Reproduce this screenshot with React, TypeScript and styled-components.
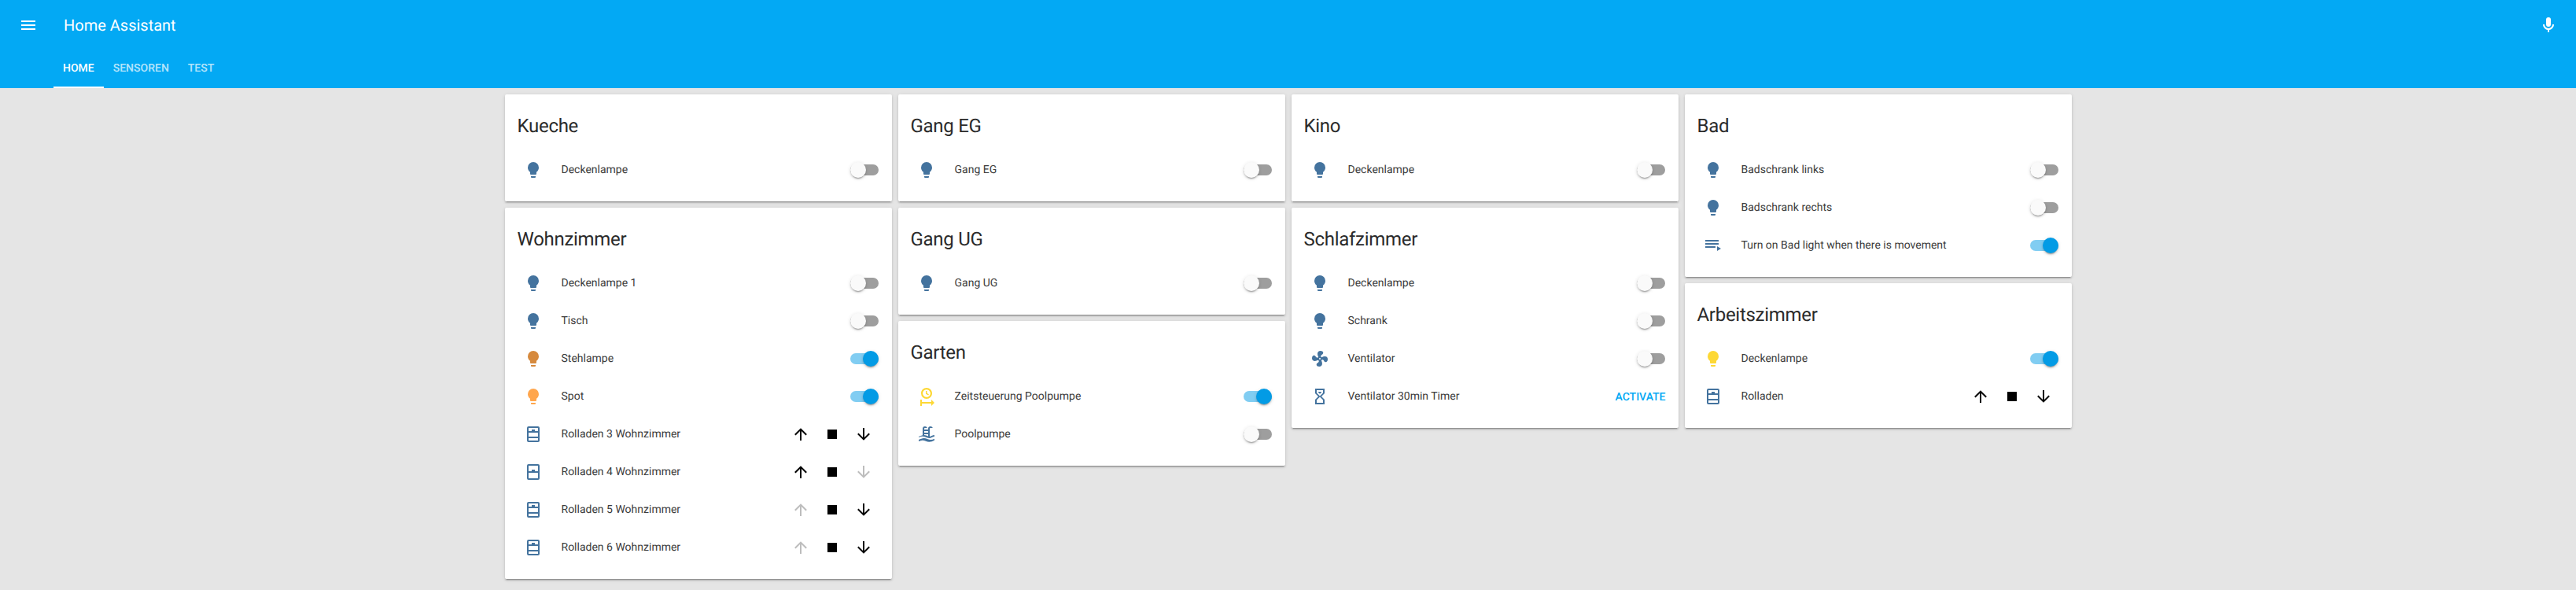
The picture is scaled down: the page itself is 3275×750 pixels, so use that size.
import { createGlobalStyle } from "styled-components";
import styled from "styled-components";

const ICONS = {
  menu: "M3,6H21V8H3V6M3,11H21V13H3V11M3,16H21V18H3V16Z",
  mic: "M12,2A3,3 0 0,1 15,5V11A3,3 0 0,1 12,14A3,3 0 0,1 9,11V5A3,3 0 0,1 12,2M19,11C19,14.53 16.39,17.44 13,17.93V21H11V17.93C7.61,17.44 5,14.53 5,11H7A5,5 0 0,0 12,16A5,5 0 0,0 17,11H19Z",
  bulb: "M12,2A7,7 0 0,0 5,9C5,11.38 6.19,13.47 8,14.74V17A1,1 0 0,0 9,18H15A1,1 0 0,0 16,17V14.74C17.81,13.47 19,11.38 19,9A7,7 0 0,0 12,2M9,21A1,1 0 0,0 10,22H14A1,1 0 0,0 15,21V20H9V21Z",
  up: "M13,20H11V8L5.5,13.5L4.08,12.08L12,4.16L19.92,12.08L18.5,13.5L13,8V20Z",
  down: "M11,4H13V16L18.5,10.5L19.92,11.92L12,19.84L4.08,11.92L5.5,10.5L11,16V4Z",
  stop: "M18,18H6V6H18V18Z",
  windowOpen: "M6,8H10V6H14V8H18V4H6V8M18,10H6V15H18V10M6,20H18V17H6V20M6,2H18A2,2 0 0,1 20,4V20A2,2 0 0,1 18,22H6A2,2 0 0,1 4,20V4A2,2 0 0,1 6,2Z",
  windowClosed: "M6,11H10V9H14V11H18V4H6V11M18,13H6V20H18V13M6,2H18A2,2 0 0,1 20,4V20A2,2 0 0,1 18,22H6A2,2 0 0,1 4,20V4A2,2 0 0,1 6,2Z",
  fan: "M12,11A1,1 0 0,0 11,12A1,1 0 0,0 12,13A1,1 0 0,0 13,12A1,1 0 0,0 12,11M12.5,2C17,2 17.11,5.57 14.75,6.75C13.76,7.24 13.32,8.29 13.13,9.22C13.61,9.42 14.03,9.73 14.35,10.13C18.05,8.13 22.03,8.92 22.03,12.5C22.03,17 18.46,17.1 17.28,14.73C16.78,13.74 15.72,13.3 14.79,13.11C14.59,13.59 14.28,14 13.88,14.34C15.87,18.03 15.08,22 11.5,22C7,22 6.91,18.42 9.27,17.24C10.25,16.75 10.69,15.71 10.89,14.79C10.4,14.59 9.97,14.27 9.65,13.87C5.96,15.85 2,15.07 2,11.5C2,7 5.56,6.89 6.74,9.26C7.24,10.25 8.29,10.68 9.22,10.87C9.41,10.39 9.73,9.97 10.14,9.65C8.15,5.96 8.94,2 12.5,2Z",
  sand: "M6,2H18V8L14,12L18,16V22H6V16L10,12L6,8V2M16,16.5L12,12.5L8,16.5V20H16V16.5M12,11.5L16,7.5V4H8V7.5L12,11.5M10,6H14V6.75L12,8.75L10,6.75V6Z",
  playlist: "M19,9H2V11H19V9M19,5H2V7H19V5M2,15H15V13H2V15M17,13V19L22,16L17,13Z",
  pool: "M2,15C3.67,14.25 5.33,13.5 7,13.17V5A3,3 0 0,1 10,2C11.31,2 12.42,2.83 12.83,4H10A1,1 0 0,0 9,5V6H14V5A3,3 0 0,1 17,2C18.31,2 19.42,2.83 19.83,4H17A1,1 0 0,0 16,5V14.94C18,14.62 20,13 22,13V15C19.78,15 17.56,17 15.33,17C12.44,17 9.56,14.83 6.67,14.83C5.11,14.83 3.56,15.42 2,16V15M14,8H9V10H14V8M14,12H9V13C10.67,13.08 12.33,13.79 14,14.45V12M2,19C4.22,18 6.44,17 8.67,17C11.56,17 14.44,19 17.33,19C18.89,19 20.44,18.4 22,17.67V19.67C19.78,20.67 17.56,21.67 15.33,21.67C12.44,21.67 9.56,19.67 6.67,19.67C5.11,19.67 3.56,20.27 2,21V19Z",
  clockStart: "M12,1C8.14,1 5,4.14 5,8A7,7 0 0,0 12,15C15.86,15 19,11.87 19,8C19,4.14 15.86,1 12,1M12,3.15C14.67,3.15 16.85,5.32 16.85,8C16.85,10.68 14.67,12.85 12,12.85A4.85,4.85 0 0,1 7.15,8A4.85,4.85 0 0,1 12,3.15M11,5V8.69L14.19,10.53L14.94,9.23L12.5,7.82V5M4,16V24H6V21H18V24L22,20L18,16V19H6V16H4Z",
};

type IconName = keyof typeof ICONS;

const BLUE = "#44739e";

type Row =
  | { kind: "toggle"; icon: IconName; label: string; on?: boolean; color?: string }
  | { kind: "cover"; icon: IconName; label: string; upOff?: boolean; downOff?: boolean }
  | { kind: "scene"; icon: IconName; label: string };

type CardData = { title: string; rows: Row[] };

const lamp = (label: string, on = false, color = BLUE): Row => ({
  kind: "toggle",
  icon: "bulb",
  label,
  on,
  color,
});

const COLUMNS: CardData[][] = [
  [
    { title: "Kueche", rows: [lamp("Deckenlampe")] },
    {
      title: "Wohnzimmer",
      rows: [
        lamp("Deckenlampe 1"),
        lamp("Tisch"),
        lamp("Stehlampe", true, "#d68a3e"),
        lamp("Spot", true, "#ffa64d"),
        { kind: "cover", icon: "windowOpen", label: "Rolladen 3 Wohnzimmer" },
        { kind: "cover", icon: "windowClosed", label: "Rolladen 4 Wohnzimmer", downOff: true },
        { kind: "cover", icon: "windowOpen", label: "Rolladen 5 Wohnzimmer", upOff: true },
        { kind: "cover", icon: "windowOpen", label: "Rolladen 6 Wohnzimmer", upOff: true },
      ],
    },
  ],
  [
    { title: "Gang EG", rows: [lamp("Gang EG")] },
    { title: "Gang UG", rows: [lamp("Gang UG")] },
    {
      title: "Garten",
      rows: [
        { kind: "toggle", icon: "clockStart", label: "Zeitsteuerung Poolpumpe", on: true, color: "#fdd835" },
        { kind: "toggle", icon: "pool", label: "Poolpumpe" },
      ],
    },
  ],
  [
    { title: "Kino", rows: [lamp("Deckenlampe")] },
    {
      title: "Schlafzimmer",
      rows: [
        lamp("Deckenlampe"),
        lamp("Schrank"),
        { kind: "toggle", icon: "fan", label: "Ventilator" },
        { kind: "scene", icon: "sand", label: "Ventilator 30min Timer" },
      ],
    },
  ],
  [
    {
      title: "Bad",
      rows: [
        lamp("Badschrank links"),
        lamp("Badschrank rechts"),
        { kind: "toggle", icon: "playlist", label: "Turn on Bad light when there is movement", on: true },
      ],
    },
    {
      title: "Arbeitszimmer",
      rows: [
        lamp("Deckenlampe", true, "#fdd835"),
        { kind: "cover", icon: "windowOpen", label: "Rolladen" },
      ],
    },
  ],
];

const GlobalStyle = createGlobalStyle`
  html, body {
    margin: 0;
    height: 100%;
    overflow: hidden;
    background: #e5e5e5;
    font-family: Roboto, "Noto Sans", sans-serif;
    -webkit-font-smoothing: antialiased;
    text-rendering: geometricPrecision;
  }
`;

const Header = styled.header`
  height: 112px;
  background: #03a9f4;
  color: #fff;
  box-sizing: border-box;
  display: flex;
  flex-direction: column;
`;

const Toolbar = styled.div`
  height: 64px;
  display: flex;
  align-items: center;
  padding: 0 23px 0 24px;
`;

const AppTitle = styled.div`
  flex: 1;
  margin-left: 33px;
  font-size: 20px;
  font-weight: 400;
`;

const Tabs = styled.nav`
  height: 48px;
  display: flex;
  padding-left: 68px;
`;

const Tab = styled.div<{ $active?: boolean }>`
  height: 48px;
  box-sizing: border-box;
  padding: 0 12px;
  display: flex;
  align-items: center;
  font-size: 14px;
  font-weight: 500;
  text-transform: uppercase;
  opacity: ${(p) => (p.$active ? 1 : 0.7)};
  border-bottom: 2px solid ${(p) => (p.$active ? "#fff" : "transparent")};
`;

const Board = styled.main`
  max-width: 2000px;
  margin: 0 auto;
  padding-top: 4px;
  display: flex;
  align-items: flex-start;
`;

const Column = styled.div`
  flex: 1 1 0;
  min-width: 0;
  padding: 0 4px;
`;

const Card = styled.section`
  margin: 4px 0 8px;
  background: #fff;
  border-radius: 2px;
  box-shadow:
    0 2px 2px 0 rgba(0, 0, 0, 0.14),
    0 1px 5px 0 rgba(0, 0, 0, 0.12),
    0 3px 1px -2px rgba(0, 0, 0, 0.2);
`;

const CardTitle = styled.h2`
  margin: 0;
  padding: 24px 16px 16px;
  font-size: 24px;
  line-height: 32px;
  font-weight: 400;
  letter-spacing: -0.012em;
  color: #2b2b2b;
`;

const Rows = styled.div`
  padding: 0 16px 16px;
`;

const RowLine = styled.div`
  height: 48px;
  display: flex;
  align-items: center;
`;

const Badge = styled.div`
  width: 40px;
  height: 40px;
  flex-shrink: 0;
  display: flex;
  align-items: center;
  justify-content: center;
`;

const Label = styled.div`
  flex: 1;
  min-width: 0;
  margin-left: 16px;
  font-size: 14px;
  color: #3c3c3c;
  white-space: nowrap;
`;

const Glyph = styled.svg<{ $color: string }>`
  width: 24px;
  height: 24px;
  display: block;
  fill: ${(p) => p.$color};
`;

const SwitchTrack = styled.div<{ $on?: boolean }>`
  position: relative;
  width: 36px;
  height: 14px;
  margin-right: 1px;
  border-radius: 8px;
  background: ${(p) => (p.$on ? "#81cdf2" : "#9e9e9e")};
`;

const SwitchThumb = styled.div<{ $on?: boolean }>`
  position: absolute;
  top: -3px;
  left: ${(p) => (p.$on ? "16px" : "0")};
  width: 20px;
  height: 20px;
  border-radius: 50%;
  background: ${(p) => (p.$on ? "#039be5" : "#fafafa")};
  box-shadow:
    0 2px 2px 0 rgba(0, 0, 0, 0.14),
    0 1px 5px 0 rgba(0, 0, 0, 0.12),
    0 3px 1px -2px rgba(0, 0, 0, 0.2);
`;

const CoverControls = styled.div`
  display: flex;
`;

const CoverButton = styled.div`
  width: 40px;
  height: 40px;
  display: flex;
  align-items: center;
  justify-content: center;
`;

const ActivateButton = styled.div`
  font-size: 14px;
  font-weight: 500;
  color: #03a9f4;
  text-transform: uppercase;
  margin-top: 2px;
`;

function Icon({ name, color }: { name: IconName; color: string }) {
  return (
    <Glyph viewBox="0 0 24 24" $color={color}>
      <path d={ICONS[name]} />
    </Glyph>
  );
}

function Switch({ on }: { on?: boolean }) {
  return (
    <SwitchTrack $on={on}>
      <SwitchThumb $on={on} />
    </SwitchTrack>
  );
}

function EntityRow({ row }: { row: Row }) {
  const iconColor = row.kind === "toggle" && row.color ? row.color : BLUE;
  return (
    <RowLine>
      <Badge>
        <Icon name={row.icon} color={iconColor} />
      </Badge>
      <Label>{row.label}</Label>
      {row.kind === "toggle" && <Switch on={row.on} />}
      {row.kind === "scene" && <ActivateButton>Activate</ActivateButton>}
      {row.kind === "cover" && (
        <CoverControls>
          <CoverButton>
            <Icon name="up" color={row.upOff ? "#bdbdbd" : "#000"} />
          </CoverButton>
          <CoverButton>
            <Icon name="stop" color="#000" />
          </CoverButton>
          <CoverButton>
            <Icon name="down" color={row.downOff ? "#bdbdbd" : "#000"} />
          </CoverButton>
        </CoverControls>
      )}
    </RowLine>
  );
}

export default function App() {
  return (
    <>
      <GlobalStyle />
      <Header>
        <Toolbar>
          <Icon name="menu" color="#fff" />
          <AppTitle>Home Assistant</AppTitle>
          <Icon name="mic" color="#fff" />
        </Toolbar>
        <Tabs>
          <Tab $active>Home</Tab>
          <Tab>Sensoren</Tab>
          <Tab>Test</Tab>
        </Tabs>
      </Header>
      <Board>
        {COLUMNS.map((cards, i) => (
          <Column key={i}>
            {cards.map((card) => (
              <Card key={card.title}>
                <CardTitle>{card.title}</CardTitle>
                <Rows>
                  {card.rows.map((row, j) => (
                    <EntityRow key={j} row={row} />
                  ))}
                </Rows>
              </Card>
            ))}
          </Column>
        ))}
      </Board>
    </>
  );
}
